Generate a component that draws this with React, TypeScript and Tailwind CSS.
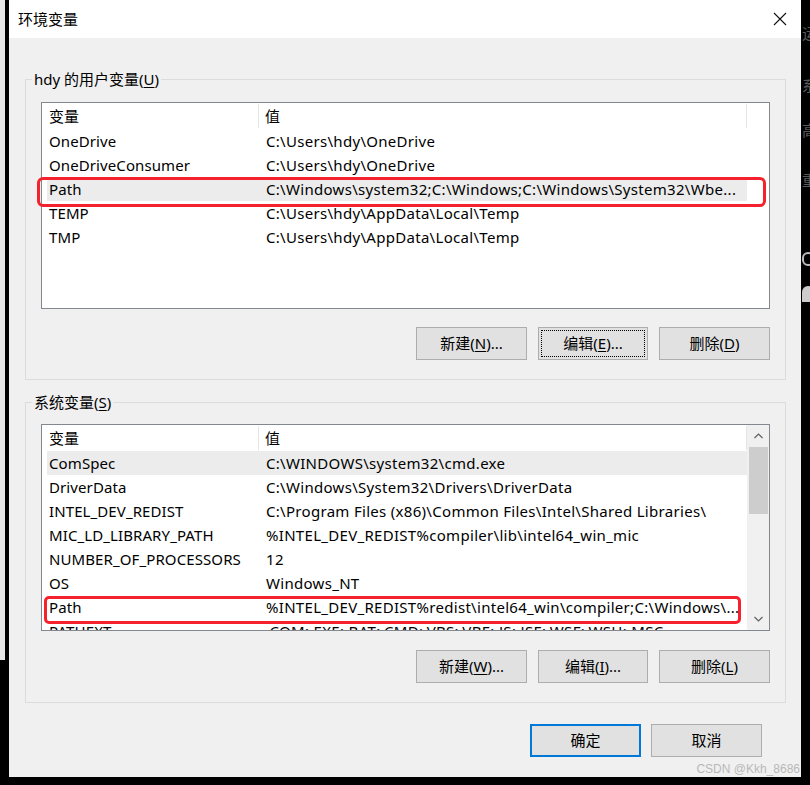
import React from "react";

type Row = { name: string; value: string };

const userRows: Row[] = [
  { name: "OneDrive", value: "C:\\Users\\hdy\\OneDrive" },
  { name: "OneDriveConsumer", value: "C:\\Users\\hdy\\OneDrive" },
  { name: "Path", value: "C:\\Windows\\system32;C:\\Windows;C:\\Windows\\System32\\Wbe..." },
  { name: "TEMP", value: "C:\\Users\\hdy\\AppData\\Local\\Temp" },
  { name: "TMP", value: "C:\\Users\\hdy\\AppData\\Local\\Temp" },
];

const sysRows: Row[] = [
  { name: "ComSpec", value: "C:\\WINDOWS\\system32\\cmd.exe" },
  { name: "DriverData", value: "C:\\Windows\\System32\\Drivers\\DriverData" },
  { name: "INTEL_DEV_REDIST", value: "C:\\Program Files (x86)\\Common Files\\Intel\\Shared Libraries\\" },
  { name: "MIC_LD_LIBRARY_PATH", value: "%INTEL_DEV_REDIST%compiler\\lib\\intel64_win_mic" },
  { name: "NUMBER_OF_PROCESSORS", value: "12" },
  { name: "OS", value: "Windows_NT" },
  { name: "Path", value: "%INTEL_DEV_REDIST%redist\\intel64_win\\compiler;C:\\Windows\\..." },
  { name: "PATHEXT", value: ".COM;.EXE;.BAT;.CMD;.VBS;.VBE;.JS;.JSE;.WSF;.WSH;.MSC" },
];

function ListView({
  rows,
  highlight,
  scroll,
  red,
}: {
  rows: Row[];
  highlight: number;
  scroll?: boolean;
  red: "user" | "sys";
}) {
  return (
    <div className="relative w-[729px] h-[207px] border border-[#828790] bg-white">
      <div className="flex h-full overflow-hidden">
        <div className="w-[705px] flex flex-col overflow-hidden">
          <div className="flex h-[26px] shrink-0">
            <div className="w-[217px] pl-[7px] flex items-center border-r border-[#e5e5e5] my-[1px]">变量</div>
            <div className="w-[488px] pl-[6px] flex items-center border-r border-[#e5e5e5] my-[1px]">值</div>
          </div>
          {rows.map((r, i) => (
            <div
              key={i}
              className={`ml-[5px] w-[700px] h-[24px] shrink-0 flex items-center whitespace-nowrap ${
                i === highlight ? "bg-[#ececec]" : ""
              }`}
            >
              <div className="w-[212px] pl-[2px] overflow-hidden tracking-[0.1px]">{r.name}</div>
              <div className="w-[488px] pl-[7px] overflow-hidden tracking-[0.3px]">{r.value}</div>
            </div>
          ))}
        </div>
        {scroll && (
          <div className="w-[22px] h-full bg-[#f0f0f0] flex flex-col items-center">
            <div className="h-[22px] w-full flex items-center justify-center">
              <svg width="9" height="6" viewBox="0 0 9 6">
                <path d="M0.5 5 L4.5 1 L8.5 5" fill="none" stroke="#606060" strokeWidth="1.2" />
              </svg>
            </div>
            <div className="w-[19px] h-[67px] bg-[#cdcdcd]" />
            <div className="flex-1" />
            <div className="h-[22px] w-full flex items-center justify-center">
              <svg width="9" height="6" viewBox="0 0 9 6">
                <path d="M0.5 1 L4.5 5 L8.5 1" fill="none" stroke="#606060" strokeWidth="1.2" />
              </svg>
            </div>
          </div>
        )}
      </div>
      {red === "user" ? (
        <div className="absolute left-[-5px] top-[74px] w-[729px] h-[30px] border-[3px] border-[#f5222d] rounded-[6px]" />
      ) : (
        <div className="absolute left-[2px] top-[171px] w-[697px] h-[28px] border-[3px] border-[#f5222d] rounded-[5px]" />
      )}
    </div>
  );
}

function Btn({
  children,
  focus,
  def,
  w = "w-[111px]",
}: {
  children: React.ReactNode;
  focus?: boolean;
  def?: boolean;
  w?: string;
}) {
  return (
    <div
      className={`${w} h-[33px] bg-[#e1e1e1] flex items-center justify-center relative ${
        def ? "border-2 border-[#0078d7]" : "border border-[#adadad]"
      }`}
    >
      {focus && <div className="absolute inset-[2px] border border-dotted border-black" />}
      <span className="relative">{children}</span>
    </div>
  );
}

function U({ c }: { c: string }) {
  return <span className="underline underline-offset-2">{c}</span>;
}

export default function App() {
  return (
    <div className="relative w-[810px] h-[785px] bg-black flex overflow-hidden text-[15px] text-black font-['Noto_Sans','Noto_Sans_CJK_SC',sans-serif]">
      <div className="w-[9px] shrink-0">
        <div className="w-[5px] h-[660px] bg-[#e6e6e6]" />
      </div>
      <div className="w-[792px] h-[777px] shrink-0 bg-[#f0f0f0] flex flex-col">
        <div className="h-[38px] bg-white flex items-center justify-between pl-[9px] pr-[14px] shrink-0">
          <span className="text-[15px] font-['Noto_Sans_CJK_SC',sans-serif]">环境变量</span>
          <svg width="14" height="14" viewBox="0 0 14 14">
            <path d="M1 1 L13 13 M13 1 L1 13" stroke="#111" strokeWidth="1.1" fill="none" />
          </svg>
        </div>

        <fieldset className="ml-[16px] w-[761px] mt-[31px] border border-[#dcdcdc] pb-[19px]">
          <legend className="ml-[6px] px-[2px] leading-[20px]">
            hdy 的用户变量(<U c="U" />)
          </legend>
          <div className="px-[15px]">
            <div className="mt-[13px]">
              <ListView rows={userRows} highlight={2} red="user" />
            </div>
            <div className="mt-[18px] flex justify-end gap-[11px]">
              <Btn>
                新建(<U c="N" />)...
              </Btn>
              <Btn focus w="w-[110px]">
                编辑(<U c="E" />)...
              </Btn>
              <Btn>
                删除(<U c="D" />)
              </Btn>
            </div>
          </div>
        </fieldset>

        <fieldset className="ml-[16px] w-[761px] mt-[12px] border border-[#dcdcdc] pb-[19px]">
          <legend className="ml-[6px] px-[2px] leading-[20px]">
            系统变量(<U c="S" />)
          </legend>
          <div className="px-[15px]">
            <div className="mt-[12px]">
              <ListView rows={sysRows} highlight={0} scroll red="sys" />
            </div>
            <div className="mt-[19px] flex justify-end gap-[11px]">
              <Btn>
                新建(<U c="W" />)...
              </Btn>
              <Btn w="w-[110px]">
                编辑(<U c="I" />)...
              </Btn>
              <Btn>
                删除(<U c="L" />)
              </Btn>
            </div>
          </div>
        </fieldset>

        <div className="mt-[21px] flex justify-end gap-[10px] pr-[39px]">
          <Btn def>确定</Btn>
          <Btn>取消</Btn>
        </div>
      </div>
      <div className="w-[9px] shrink-0 flex flex-col text-[#5a5a5a] text-[15px] leading-none overflow-hidden">
        <span className="mt-[26px] ml-[1px]">运</span>
        <span className="mt-[37px] ml-[1px]">系</span>
        <span className="mt-[30px] ml-[1px]">高</span>
        <span className="mt-[35px] ml-[1px]">重</span>
        <span className="mt-[64px] ml-[1px] w-[12px] h-[14px] rounded-full border-2 border-[#bbb]" />
        <span className="mt-[20px] ml-[1px] w-[12px] h-[16px] rounded-t-full bg-[#ccc]" />
      </div>
      <div className="absolute right-[10px] top-[760px] text-[12px] text-[#b8b8b8] font-['Liberation_Sans',sans-serif]">
        CSDN @Kkh_8686
      </div>
    </div>
  );
}
